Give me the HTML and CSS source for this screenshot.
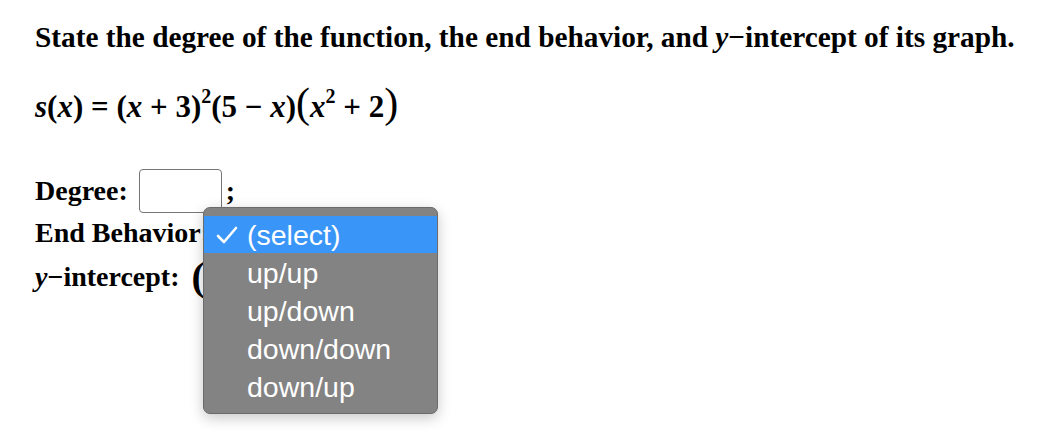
FILE: index.html
```html
<!DOCTYPE html>
<html>
<head>
<meta charset="utf-8">
<link rel="stylesheet" href="styles.css">
</head>
<body>
<div class="page">
  <p class="title">State the degree of the function, the end behavior, and <i>y</i>−intercept of its graph.</p>
  <p class="eq"><i>s</i>(<i>x</i>) = (<i>x</i> + 3)<sup>2</sup>(5 − <i>x</i>)<span class="big">(</span><i>x</i><sup class="sq">2</sup> + 2<span class="big">)</span></p>
  <div class="row first"><span>Degree:</span><span class="input"></span><span class="semi">;</span></div>
  <div class="row"><span>End Behavior:</span><span class="select"></span></div>
  <div class="row"><span><i>y</i>−intercept:</span><span class="paren">(</span></div>

  <div class="menu">
    <div class="opt active"><svg class="check" width="22" height="20" viewBox="0 0 22 20"><path d="M2 11 L8 17 L20 3" fill="none" stroke="#fff" stroke-width="2.6" stroke-linecap="round" stroke-linejoin="round"/></svg>(select)</div>
    <div class="opt">up/up</div>
    <div class="opt">up/down</div>
    <div class="opt">down/down</div>
    <div class="opt">down/up</div>
  </div>
</div>
</body>
</html>
```
FILE: styles.css
```css
html, body {
  margin: 0;
  padding: 0;
  background: #ffffff;
  min-height: 448px;
}
.page {
  position: relative;
  height: 448px;
  box-sizing: border-box;
  padding: 17px 35px 0 35px;
  font-family: "Liberation Serif", "Times New Roman", serif;
  font-weight: bold;
  font-size: 28px;
  color: #000;
}
.title {
  margin: 0;
  line-height: 40px;
  font-size: 29.3px;
}
.eq {
  margin: 30px 0 0 0;
  line-height: 40px;
  font-size: 31px;
  font-weight: bold;
}
.eq i {
  font-weight: bold;
}
.eq sup {
  font-size: 20px;
  line-height: 0;
  position: relative;
  top: -3px;
}
.eq .big {
  font-size: 42px;
  font-weight: normal;
  line-height: 0;
  display: inline-block;
}
.row {
  display: flex;
  align-items: center;
  height: 44px;
  line-height: 44px;
}
.row.first {
  margin-top: 42px;
  margin-bottom: -2px;
}
.input {
  display: inline-block;
  width: 81px;
  height: 42px;
  border: 1px solid #767676;
  border-radius: 4px;
  margin-left: 11px;
}
.semi {
  margin-left: 4px;
}
.select {
  display: inline-block;
  width: 20px;
  height: 30px;
}
.paren {
  margin-left: 12px;
  font-size: 40px;
}
.menu {
  position: absolute;
  left: 203px;
  top: 207px;
  width: 235px;
  height: 207px;
  box-sizing: border-box;
  background: #838383;
  border: 1px solid #6b6b6b;
  border-radius: 7px;
  padding-top: 8px;
  box-shadow: 0 4px 14px rgba(0,0,0,0.22);
  font-family: "Liberation Sans", Arial, sans-serif;
  font-weight: normal;
  font-size: 28.5px;
  color: #ffffff;
}
.opt {
  height: 38px;
  line-height: 38px;
  padding-left: 43px;
  position: relative;
}
.opt.active {
  background: #3a95f8;
  height: 37px;
  margin-bottom: 1px;
}
.check {
  position: absolute;
  left: 12px;
  top: 9px;
}
```
